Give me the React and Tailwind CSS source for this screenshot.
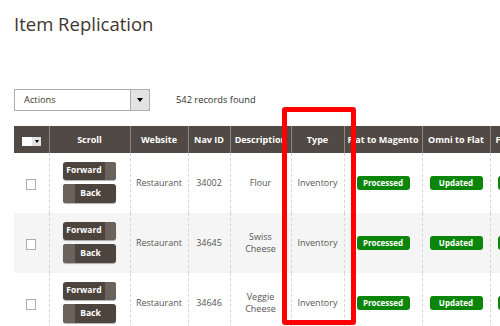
import { } from 'react'

const rows = [
  { site: 'Restaurant', nav: '34002', desc: 'Flour', type: 'Inventory' },
  { site: 'Restaurant', nav: '34645', desc: 'Swiss Cheese', type: 'Inventory' },
  { site: 'Restaurant', nav: '34646', desc: 'Veggie Cheese', type: 'Inventory' },
]

function Badge({ children }) {
  return (
    <span className="inline-flex items-center justify-center w-[53px] h-[14px] rounded-[3px] bg-[#0b860b] text-white text-[8px] font-bold leading-none">
      {children}
    </span>
  )
}

function ScrollButtons() {
  return (
    <div className="flex flex-col items-center gap-[4px] -mt-[2px]">
      <button className="flex w-[53px] h-[18px] rounded-[3px] overflow-hidden bg-[#4d443e] shadow-[0_1px_1px_rgba(0,0,0,0.3)]">
        <span className="flex-1 flex items-center justify-center text-white text-[8.5px] font-bold leading-none">Forward</span>
        <span className="w-[11px] h-full bg-[#6b625c]" />
      </button>
      <button className="flex w-[53px] h-[19px] rounded-[3px] overflow-hidden bg-[#4d443e] shadow-[0_1px_1px_rgba(0,0,0,0.3)]">
        <span className="w-[12px] h-full bg-[#6b625c]" />
        <span className="flex-1 flex items-center justify-center pr-[10px] text-white text-[8.5px] font-bold leading-none">Back</span>
      </button>
    </div>
  )
}

const th = 'border-l border-[#8c847f] text-white text-[9px] font-bold text-center align-middle whitespace-nowrap overflow-hidden'
const td = 'border-l border-dashed border-[#d6d6d6] text-[9px] text-[#555] text-center align-middle'

export default function App() {
  return (
    <div
      className="relative w-[500px] h-[326px] overflow-hidden bg-white"
      style={{ fontFamily: '"Open Sans", "Liberation Sans", sans-serif' }}
    >
      <h1 className="pl-[14px] pt-[10px] text-[18.5px] leading-[28px] text-[#41362f] font-normal">Item Replication</h1>

      {/* Toolbar */}
      <div className="flex items-center mt-[51px] pl-[14px] h-[22px]">
        <div className="flex w-[136px] h-[22px] border border-[#adadad] bg-white">
          <span className="flex-1 flex items-center pl-[9px] text-[9.3px] text-[#41362f]">Actions</span>
          <span className="w-[19px] flex items-center justify-center bg-[#e3e3e3] border-l border-[#adadad]">
            <span className="w-0 h-0 border-l-[3px] border-r-[3px] border-t-[4px] border-l-transparent border-r-transparent border-t-black" />
          </span>
        </div>
        <span className="ml-[26px] text-[9.3px] text-[#303030]">542 records found</span>
      </div>

      {/* Grid */}
      <div className="ml-[14px] mt-[15px] w-[600px]">
        <table className="table-fixed border-collapse w-[600px]">
          <colgroup>
            <col className="w-[35px]" />
            <col className="w-[81px]" />
            <col className="w-[58px]" />
            <col className="w-[42px]" />
            <col className="w-[61px]" />
            <col className="w-[53px]" />
            <col className="w-[78px]" />
            <col className="w-[68px]" />
            <col className="w-[124px]" />
          </colgroup>
          <thead>
            <tr className="h-[27px] bg-[#514943]">
              <th className="text-center align-middle">
                <div className="inline-flex items-center h-[9px] ml-[1px]">
                  <span className="w-[10px] h-[9px] bg-white" />
                  <span className="w-[9px] h-[9px] bg-[#e3e3e3] flex items-center justify-center">
                    <span className="w-0 h-0 border-l-[2.5px] border-r-[2.5px] border-t-[3px] border-l-transparent border-r-transparent border-t-black" />
                  </span>
                </div>
              </th>
              <th className={th}>Scroll</th>
              <th className={th}>Website</th>
              <th className={th}>Nav ID</th>
              <th className={th}>Description</th>
              <th className={th}>Type</th>
              <th className={th}>Flat to Magento</th>
              <th className={th}>Omni to Flat</th>
              <th className={`${th} text-left pl-[5px]`}>Flat to Omni</th>
            </tr>
          </thead>
          <tbody>
            {rows.map((r, i) => (
              <tr key={r.nav} className={`h-[60px] ${i % 2 === 1 ? 'bg-[#f5f5f5]' : 'bg-white'}`}>
                <td className="text-center align-middle">
                  <span className="inline-block w-[10px] h-[11px] border border-[#adadad] bg-white align-middle" />
                </td>
                <td className={td}><ScrollButtons /></td>
                <td className={td}>{r.site}</td>
                <td className={td}>{r.nav}</td>
                <td className={`${td} px-[12px] leading-[12px]`}>{r.desc}</td>
                <td className={td}>{r.type}</td>
                <td className={td}><Badge>Processed</Badge></td>
                <td className={td}><Badge>Updated</Badge></td>
                <td className={`${td} text-left pl-[7px]`}><Badge>Updated</Badge></td>
              </tr>
            ))}
          </tbody>
        </table>
      </div>

      {/* Highlight */}
      <div className="absolute left-[282px] top-[107px] w-[74px] h-[218px] border-[5px] border-[#ff0000] rounded-[3px]" />
    </div>
  )
}
